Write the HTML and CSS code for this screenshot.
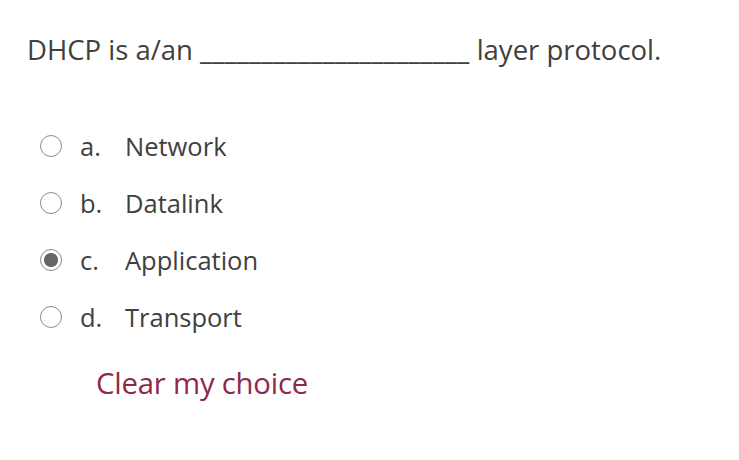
FILE: index.html
```html
<!DOCTYPE html>
<html>
<head>
<meta charset="utf-8">
<link rel="stylesheet" href="styles.css">
</head>
<body>
<div class="que">
  <p class="qtext">DHCP is a/an <span class="blank">______________________</span> layer protocol.</p>
  <div class="answers">
    <label class="opt"><input type="radio" name="q"><span class="num">a.</span><span class="txt">Network</span></label>
    <label class="opt"><input type="radio" name="q"><span class="num">b.</span><span class="txt">Datalink</span></label>
    <label class="opt"><input type="radio" name="q" checked><span class="num">c.</span><span class="txt">Application</span></label>
    <label class="opt"><input type="radio" name="q"><span class="num">d.</span><span class="txt">Transport</span></label>
  </div>
  <a class="clear" href="#">Clear my choice</a>
</div>
</body>
</html>
```
FILE: styles.css
```css
html, body { margin: 0; padding: 0; background: #fff; }
body {
  font-family: "Open Sans", "Noto Sans", sans-serif;
  color: #404040;
}
.que { padding: 28px 0 0 27px; }
.qtext { margin: 0; line-height: 44px; font-size: 27.5px; }
.blank { letter-spacing: 0.2px; }
.answers { display: flex; flex-direction: column; margin-top: 45px; padding-left: 13px; }
.opt { display: flex; align-items: center; height: 57px; font-size: 25.5px; }
.opt input {
  appearance: none; -webkit-appearance: none;
  width: 22px; height: 22px; margin: 0 18px 0 0;
  border: 1.5px solid #8c8c8c; border-radius: 50%;
  box-sizing: border-box; background: #fff;
}
.opt input:checked { border-color: #8a8a8a; background: radial-gradient(circle, #666 0 6.5px, #fff 7.5px); }
.num { width: 45px; }
.clear {
  display: inline-block; margin: 18px 0 0 69px;
  color: #8e2a4a; text-decoration: none; font-size: 29.3px; letter-spacing: -0.2px;
}
```
